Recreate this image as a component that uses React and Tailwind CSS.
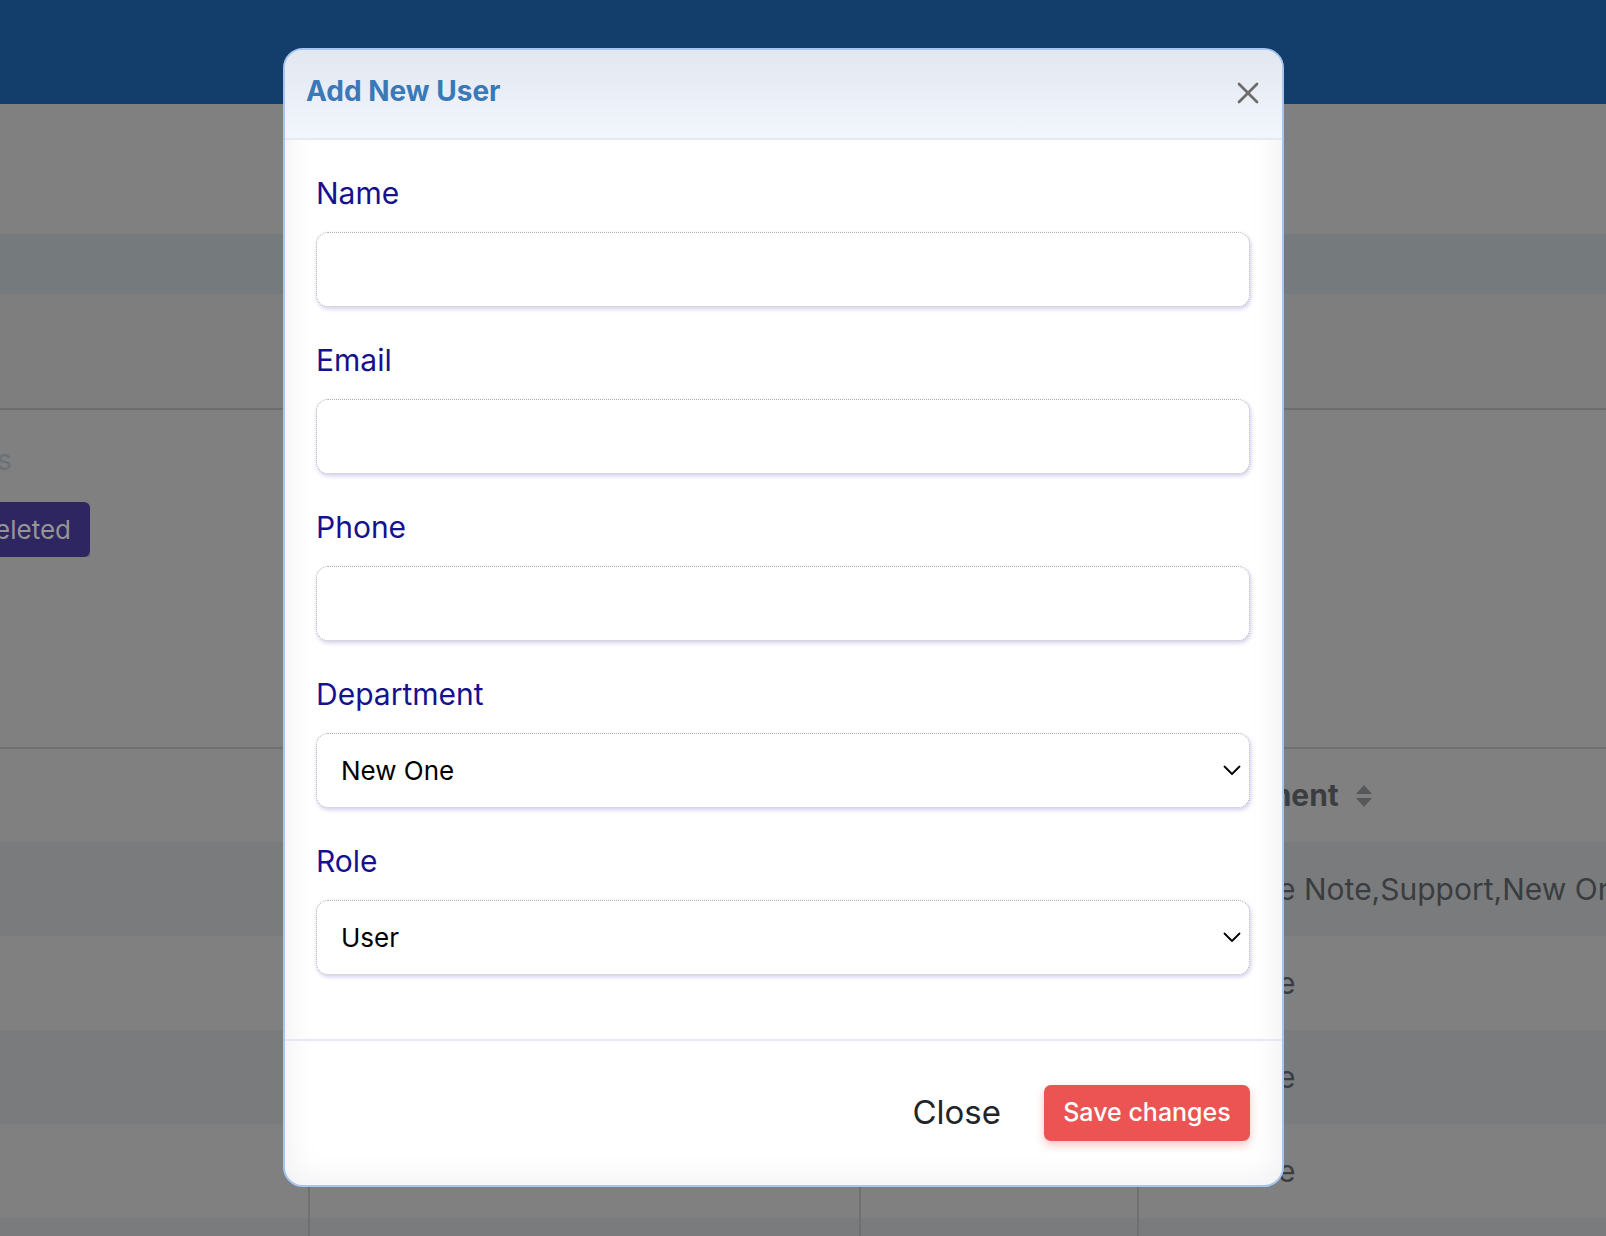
const fields = [
    { label: 'Name', type: 'input' },
    { label: 'Email', type: 'input' },
    { label: 'Phone', type: 'input' },
    { label: 'Department', type: 'select', value: 'New One' },
    { label: 'Role', type: 'select', value: 'User' },
];

const rows = [
    { text: 'Release Note,Support,New One', dark: true },
    { text: 'Release', dark: false },
    { text: 'Release', dark: true },
    { text: 'Release', dark: false },
    { text: '', dark: true },
];

const Chevron = () => (
    <svg width="18" height="11" viewBox="0 0 18 11" fill="none">
        <path d="M1.5 1.5 L9 9 L16.5 1.5" stroke="black" strokeWidth="1.8" strokeLinecap="round" strokeLinejoin="round" />
    </svg>
);

const Field = ({ field }) => (
    <div className="mb-[35px]">
        <label className="block text-[30px] leading-[36px] text-[#16118c] mb-[21px]">
            {field.label}
        </label>
        <div className="h-[75px] flex items-center justify-between bg-white border border-dotted border-[#b0b0b0] rounded-[12px] shadow-[1px_2px_4px_rgba(95,80,200,0.28)] pl-[24px] pr-[8px]">
            <span className="text-[26px] text-black">{field.value}</span>
            {field.type === 'select' && <Chevron />}
        </div>
    </div>
);

const App = () => {
    return (
        <div className="relative w-[1606px] h-[1236px] overflow-hidden bg-[#808080] font-['Inter',sans-serif]">
            {/* Dimmed page behind the modal */}
            <div className="h-[104px] bg-[#133d6a]" />
            <div className="h-[130px]" />
            <div className="h-[60px] bg-[#757a7d]" />
            <div className="h-[116px] bg-[#7e7e7e] border-b-2 border-[#6e6e6e]" />

            <div className="h-[337px] pt-[30px]">
                <div className="w-[12px] flex justify-end overflow-hidden">
                    <span className="whitespace-nowrap text-[29px] leading-[40px] text-[#6c7176]">Users</span>
                </div>
                <div className="mt-[22px] w-[90px] flex justify-end overflow-hidden">
                    <div className="whitespace-nowrap h-[55px] flex items-center pl-[20px] pr-[19px] rounded-[6px] bg-[#2e2660] text-[26px] text-[#959595] shadow-[0_2px_4px_rgba(0,0,0,0.25)]">
                        Show Deleted
                    </div>
                </div>
            </div>

            {/* Table */}
            <div className="border-t-2 border-[#6f6f6f]">
                <div className="h-[93px] grid grid-cols-[310px_551px_278px_1fr] items-center">
                    <div />
                    <div />
                    <div />
                    <div className="flex items-center gap-[16px] pl-[25px] text-[30px] font-bold text-[#3b3d40] whitespace-nowrap">
                        Department
                        <svg width="18" height="24" viewBox="0 0 18 24" className="text-[#555759]">
                            <path d="M9 1 L17 10 H1 Z M9 23 L17 14 H1 Z" fill="currentColor" />
                        </svg>
                    </div>
                </div>
                {rows.map((row, i) => (
                    <div
                        key={i}
                        className={`h-[94px] grid grid-cols-[310px_551px_278px_1fr] ${row.dark ? 'bg-[#7a7b7c]' : 'bg-[#808080]'}`}
                    >
                        <div className="border-r-2 border-[#707070]" />
                        <div className="border-r-2 border-[#707070]" />
                        <div className="border-r-2 border-[#707070]" />
                        <div className="flex items-center pl-[45px] text-[30px] text-[#3a3d40] whitespace-nowrap">
                            {row.text}
                        </div>
                    </div>
                ))}
            </div>

            {/* Modal */}
            <div className="absolute left-[283px] top-[48px] w-[1001px] h-[1139px] flex flex-col bg-white border-2 border-[#a7c5ef] rounded-[20px] overflow-hidden shadow-[inset_0_0_34px_rgba(20,30,60,0.08)]">
                <div className="flex items-center justify-between pl-[21px] pr-[22px] pt-[23px] pb-[29px] bg-gradient-to-b from-[#e2e7f0] to-[#f2f6fd] border-b-2 border-[#e6eaf0]">
                    <h5 className="text-[28px] leading-[36px] font-bold text-[#3a78b7]">Add New User</h5>
                    <svg width="24" height="24" viewBox="0 0 24 24" fill="none" className="mt-[4px]">
                        <path d="M3 3 L21 21 M21 3 L3 21" stroke="#6c6c6c" strokeWidth="2.8" strokeLinecap="round" />
                    </svg>
                </div>

                <div className="flex-1 pt-[35px] pl-[31px] pr-[32px]">
                    {fields.map((f) => (
                        <Field key={f.label} field={f} />
                    ))}
                </div>

                <div className="h-[146px] flex items-center justify-end gap-[43px] pr-[32px] border-t-2 border-[#e6eaf0]">
                    <button className="text-[33px] text-[#212529]">Close</button>
                    <button className="w-[206px] h-[56px] rounded-[7px] bg-[#ec5454] text-white text-[25px] font-medium shadow-[0_4px_10px_rgba(236,84,84,0.35)]">
                        Save changes
                    </button>
                </div>
            </div>
        </div>
    );
};

export default App;
